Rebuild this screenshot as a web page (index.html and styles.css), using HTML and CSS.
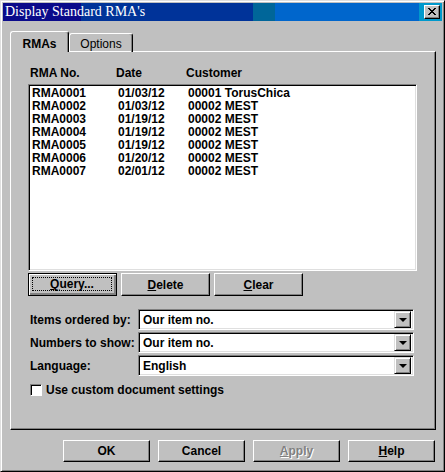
FILE: index.html
```html
<!DOCTYPE html>
<html lang="en">
<head>
    <meta charset="UTF-8">
    <title>Display Standard RMA's</title>
    <link rel="stylesheet" href="styles.css">
</head>
<body>
    <div class="window">
        <div class="titlebar">
            <span class="title">Display Standard RMA's</span>
            <span class="close">
                <svg width="8" height="7" viewBox="0 0 8 7">
                    <path d="M0 0h2v1h1v1h2v-1h1v-1h2v1h-1v1h-1v1h-1v1h1v1h1v1h1v1h-2v-1h-1v-1h-2v1h-1v1h-2v-1h1v-1h1v-1h1v-1h-1v-1h-1v-1h-1z" fill="#000"/>
                </svg>
            </span>
        </div>

        <div class="content">
            <div class="tabs">
                <div class="tab active">RMAs</div>
                <div class="tab">Options</div>
            </div>
            <div class="pane">
                <div class="cols head">
                    <span class="c1">RMA No.</span>
                    <span class="c2">Date</span>
                    <span class="c3">Customer</span>
                </div>
                <div class="listbox">
                    <div class="cols"><span class="c1">RMA0001</span><span class="c2">01/03/12</span><span class="c3">00001 TorusChica</span></div>
                    <div class="cols"><span class="c1">RMA0002</span><span class="c2">01/03/12</span><span class="c3">00002 MEST</span></div>
                    <div class="cols"><span class="c1">RMA0003</span><span class="c2">01/19/12</span><span class="c3">00002 MEST</span></div>
                    <div class="cols"><span class="c1">RMA0004</span><span class="c2">01/19/12</span><span class="c3">00002 MEST</span></div>
                    <div class="cols"><span class="c1">RMA0005</span><span class="c2">01/19/12</span><span class="c3">00002 MEST</span></div>
                    <div class="cols"><span class="c1">RMA0006</span><span class="c2">01/20/12</span><span class="c3">00002 MEST</span></div>
                    <div class="cols"><span class="c1">RMA0007</span><span class="c2">02/01/12</span><span class="c3">00002 MEST</span></div>
                </div>
                <div class="actions">
                    <button class="btn default"><span class="focus"><u>Q</u>uery...</span></button>
                    <button class="btn"><u>D</u>elete</button>
                    <button class="btn"><u>C</u>lear</button>
                </div>

                <div class="settings">
                    <div class="row">
                        <label>Items ordered by:</label>
                        <div class="combo"><span>Our item no.</span><span class="arrow"></span></div>
                    </div>
                    <div class="row">
                        <label>Numbers to show:</label>
                        <div class="combo"><span>Our item no.</span><span class="arrow"></span></div>
                    </div>
                    <div class="row">
                        <label>Language:</label>
                        <div class="combo"><span>English</span><span class="arrow"></span></div>
                    </div>
                </div>

                <div class="check">
                    <span class="box"></span>
                    <span>Use custom document settings</span>
                </div>
            </div>

            <div class="footer">
                <button class="btn wide">OK</button>
                <button class="btn wide">Cancel</button>
                <button class="btn wide disabled"><u>A</u>pply</button>
                <button class="btn wide"><u>H</u>elp</button>
            </div>
        </div>
    </div>
</body>
</html>
```

FILE: styles.css
```css
html, body {
    margin: 0;
    padding: 0;
}
body {
    width: 445px;
    height: 472px;
    background: #c0c0c0;
    font-family: "Liberation Sans", Arial, sans-serif;
    font-size: 12px;
    font-weight: bold;
    color: #000;
}
.window {
    box-sizing: border-box;
    width: 445px;
    height: 472px;
    background: #c0c0c0;
    border: 1px solid;
    border-color: #dfdfdf #000 #000 #dfdfdf;
    box-shadow: inset 1px 1px 0 #fff, inset -1px -1px 0 #808080;
    padding: 2px;
}
.titlebar {
    height: 18px;
    display: flex;
    align-items: center;
    justify-content: space-between;
    padding: 0 2px 0 2px;
    background: linear-gradient(to right,
        #0a0a8a 0, #0a0a8a 78px,
        #003399 78px, #003399 250px,
        #006699 250px, #006699 272px,
        #0066cc 272px, #0066cc 416px,
        #0099cc 416px);
}
.title {
    font-family: "Liberation Serif", "Times New Roman", serif;
    font-weight: normal;
    font-size: 14px;
    color: #fff;
}
.close {
    box-sizing: border-box;
    width: 16px;
    height: 14px;
    background: #c0c0c0;
    border: 1px solid;
    border-color: #fff #000 #000 #fff;
    box-shadow: inset -1px -1px 0 #808080;
    display: flex;
    align-items: center;
    justify-content: center;
    padding-bottom: 1px;
}
.content {
    padding: 10px 6px 0 7px;
}
.tabs {
    display: flex;
    align-items: flex-end;
    height: 21px;
    position: relative;
    z-index: 1;
    margin-bottom: -1px;
}
.tab {
    box-sizing: border-box;
    height: 19px;
    padding: 1px 14px 0;
    border: 1px solid;
    border-bottom: none;
    border-color: #fff #000 #000 #fff;
    border-radius: 3px 3px 0 0;
    box-shadow: inset -1px 0 0 #808080;
    font-weight: normal;
    display: flex;
    align-items: center;
    width: 64px;
    justify-content: center;
}
.tab.active {
    height: 21px;
    width: 59px;
    font-weight: bold;
    background: #c0c0c0;
    padding-top: 4px;
    padding-bottom: 1px;
}
.pane {
    box-sizing: border-box;
    width: 426px;
    height: 379px;
    border: 1px solid;
    border-color: #fff #000 #000 #fff;
    box-shadow: inset -1px -1px 0 #808080;
    padding: 15px 0 0 17px;
}
.cols {
    display: flex;
    height: 13px;
    line-height: 13px;
    white-space: nowrap;
}
.cols.head {
    height: 17px;
    padding-left: 2px;
}
.c1 { width: 86px; }
.c2 { width: 70px; }
.listbox {
    box-sizing: border-box;
    width: 389px;
    height: 187px;
    background: #fff;
    border: 1px solid;
    border-color: #808080 #fff #fff #808080;
    box-shadow: inset 1px 1px 0 #000, inset -1px -1px 0 #dfdfdf;
    padding: 2px 0 0 3px;
}
.actions {
    display: flex;
    gap: 4px;
    margin-top: 2px;
}
.btn {
    box-sizing: border-box;
    height: 23px;
    width: 89px;
    background: #c0c0c0;
    border: 1px solid;
    border-color: #fff #000 #000 #fff;
    box-shadow: inset -1px -1px 0 #808080;
    font-family: inherit;
    font-size: 12px;
    font-weight: bold;
    color: #000;
    padding: 0;
    display: flex;
    align-items: center;
    justify-content: center;
}
.btn.default {
    border: 1px solid #000;
    box-shadow: inset 1px 1px 0 #fff, inset -2px -2px 0 #808080;
    padding: 3px 4px 4px 3px;
}
.focus {
    flex: 1;
    align-self: stretch;
    display: flex;
    align-items: center;
    justify-content: center;
    border: 1px dotted #000;
}
.settings {
    margin-top: 13px;
    display: flex;
    flex-direction: column;
    gap: 2px;
}
.row {
    display: flex;
    align-items: center;
}
.row label {
    width: 110px;
    padding-left: 2px;
    box-sizing: border-box;
}
.combo {
    box-sizing: border-box;
    width: 276px;
    height: 21px;
    background: #fff;
    border: 1px solid;
    border-color: #808080 #fff #fff #808080;
    box-shadow: inset 1px 1px 0 #000, inset -1px -1px 0 #dfdfdf;
    display: flex;
    align-items: center;
    justify-content: space-between;
    padding: 0 2px 0 4px;
}
.arrow {
    box-sizing: border-box;
    width: 17px;
    height: 17px;
    background: #c0c0c0;
    border: 1px solid;
    border-color: #dfdfdf #000 #000 #dfdfdf;
    box-shadow: inset 1px 1px 0 #fff, inset -1px -1px 0 #808080;
    display: flex;
    align-items: center;
    justify-content: center;
}
.arrow::after {
    content: "";
    border-left: 4px solid transparent;
    border-right: 4px solid transparent;
    border-top: 4px solid #000;
    margin-top: 1px;
}
.check {
    display: flex;
    align-items: center;
    gap: 4px;
    margin-top: 7px;
    padding-left: 2px;
}
.box {
    box-sizing: border-box;
    width: 12px;
    height: 12px;
    background: #fff;
    border: 1px solid;
    border-color: #808080 #fff #fff #808080;
    box-shadow: inset 1px 1px 0 #000;
}
.footer {
    display: flex;
    gap: 8px;
    justify-content: flex-end;
    padding-right: 1px;
    margin-top: 10px;
}
.btn.wide {
    width: 87px;
    height: 22px;
}
.btn.disabled {
    color: #808080;
    text-shadow: 1px 1px 0 #fff;
}
```
